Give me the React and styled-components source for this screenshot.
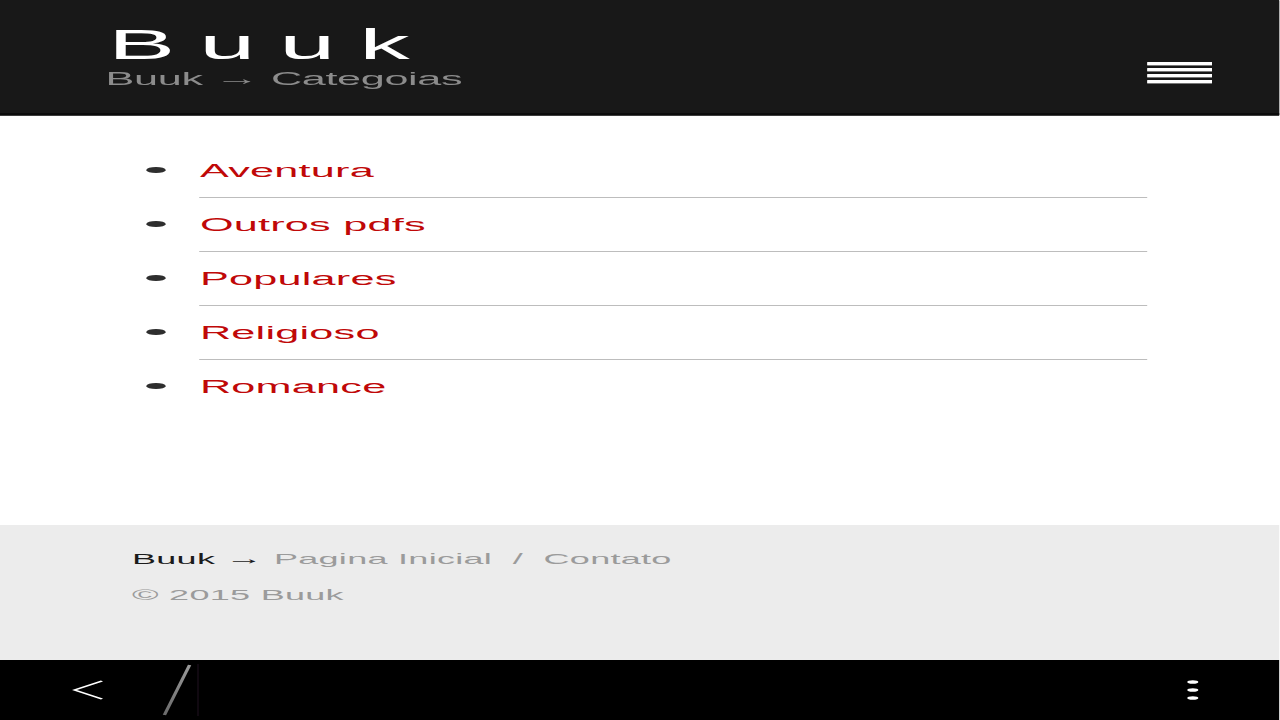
import React from 'react';
import styled, { createGlobalStyle } from 'styled-components';

const GlobalStyle = createGlobalStyle`
  html, body {
    margin: 0;
    padding: 0;
    background: #000;
    overflow: hidden;
  }
  body {
    font-family: "Liberation Sans", Arial, sans-serif;
  }
`

const categories = ['Aventura', 'Outros pdfs', 'Populares', 'Religioso', 'Romance'];

const App = () => {
    return (
        <>
            <GlobalStyle />
            <Screen>
                <Header>
                    <Brand>
                        <Title>Buuk</Title>
                        <Crumb>Buuk <Arrow>→</Arrow> Categoias</Crumb>
                    </Brand>
                    <Burger aria-label="menu">
                        <span /><span /><span /><span />
                    </Burger>
                </Header>

                <Main>
                    <List>
                        {categories.map((name, i) => (
                            <Item key={name}>
                                <Bullet />
                                <Label last={i === categories.length - 1}>{name}</Label>
                            </Item>
                        ))}
                    </List>
                </Main>

                <Footer>
                    <FooterLinks>
                        <strong>Buuk</strong> <Arrow>→</Arrow> <span>Pagina Inicial&nbsp; /&nbsp; Contato</span>
                    </FooterLinks>
                    <Copy>© 2015 Buuk</Copy>
                </Footer>

                <NavBar>
                    <svg width="13" height="22" viewBox="0 0 13 22">
                        <path d="M12.5 2 L1 11 L12.5 20" fill="none" stroke="#fff" strokeWidth="1.4" />
                    </svg>
                    <svg width="16" height="60" viewBox="0 0 16 60">
                        <defs>
                            <linearGradient id="slash" x1="0" y1="0" x2="0" y2="1">
                                <stop offset="0" stopColor="#9a9a9a" />
                                <stop offset="1" stopColor="#6a6a6a" />
                            </linearGradient>
                        </defs>
                        <path d="M12 5 L1.5 55" stroke="url(#slash)" strokeWidth="1.4" />
                        <path d="M15.5 4 L15.5 56" stroke="#1c0f1c" strokeWidth="0.5" />
                    </svg>
                    <Spacer />
                    <svg width="6" height="22" viewBox="0 0 6 22">
                        <ellipse cx="3" cy="3" rx="2.3" ry="1.8" fill="#fff" />
                        <ellipse cx="3" cy="11" rx="2.3" ry="1.8" fill="#fff" />
                        <ellipse cx="3" cy="19" rx="2.3" ry="1.8" fill="#fff" />
                    </svg>
                </NavBar>
            </Screen>
        </>
    );
};

/* the reference is a narrow phone page stretched to 1280 wide */
const Screen = styled.div`
width: 533.33px;
height: 720px;
display: flex;
flex-direction: column;
transform: scaleX(2.4);
transform-origin: 0 0;
background: #fff;
`

const Header = styled.header`
height: 115px;
flex-shrink: 0;
display: flex;
justify-content: space-between;
align-items: flex-start;
padding: 24px 28px 0 44px;
box-sizing: border-box;
background: #181818;
border-bottom: 2px solid #0b0b0b;
box-shadow: 0 1px 0 #3c3c3c;
position: relative;
z-index: 1;
`

const Brand = styled.div`
display: flex;
flex-direction: column;
`

const Title = styled.h1`
margin: 0 0 0 1px;
font-size: 42px;
line-height: 42px;
font-weight: normal;
letter-spacing: 10px;
color: #fff;
`

const Crumb = styled.div`
margin-top: 4px;
font-size: 18px;
line-height: 18px;
letter-spacing: -0.15px;
color: #8c8c8c;
`

const Arrow = styled.span`
font-size: 1.05em;
line-height: 0;
`

const Burger = styled.div`
margin-top: 38px;
width: 27.5px;
display: flex;
flex-direction: column;
gap: 3px;
span{
    display: block;
    height: 3px;
    background: #fff;
    box-shadow: 0 1px 0 #777;
}
`

const Main = styled.main`
flex: 1;
padding-top: 29px;
`

const List = styled.ul`
list-style: none;
margin: 0;
padding: 0 55.4px 0 61.4px;
`

const Item = styled.li`
display: flex;
align-items: flex-start;
`

const Bullet = styled.span`
width: 8px;
height: 5.5px;
margin: 23px 13.9px 0 0;
border-radius: 50%;
background: #2e2e2e;
flex-shrink: 0;
`

const Label = styled.a`
flex: 1;
display: block;
padding: 18px 0 17px;
font-size: 18px;
line-height: 18px;
letter-spacing: 0.1px;
color: #c00808;
border-bottom: 1px solid ${props => props.last ? 'transparent' : '#bdbdbd'};
`

const Footer = styled.footer`
height: 135px;
flex-shrink: 0;
box-sizing: border-box;
padding: 26px 0 0 55px;
background: #ececec;
font-size: 15px;
line-height: 15px;
letter-spacing: 0.12px;
color: #9b9b9b;
`

const FooterLinks = styled.div`
color: #1b1b1b;
strong{
    font-weight: normal;
    color: #1b1b1b;
}
span:last-child{
    color: #9b9b9b;
}
`

const Copy = styled.div`
margin-top: 21px;
color: #9b9b9b;
`

const NavBar = styled.nav`
height: 60px;
flex-shrink: 0;
display: flex;
align-items: center;
padding: 0 33.5px 0 30px;
background: #000;
svg:nth-child(2){
    margin-left: 24px;
}
`

const Spacer = styled.div`
flex: 1;
`

export default App;
